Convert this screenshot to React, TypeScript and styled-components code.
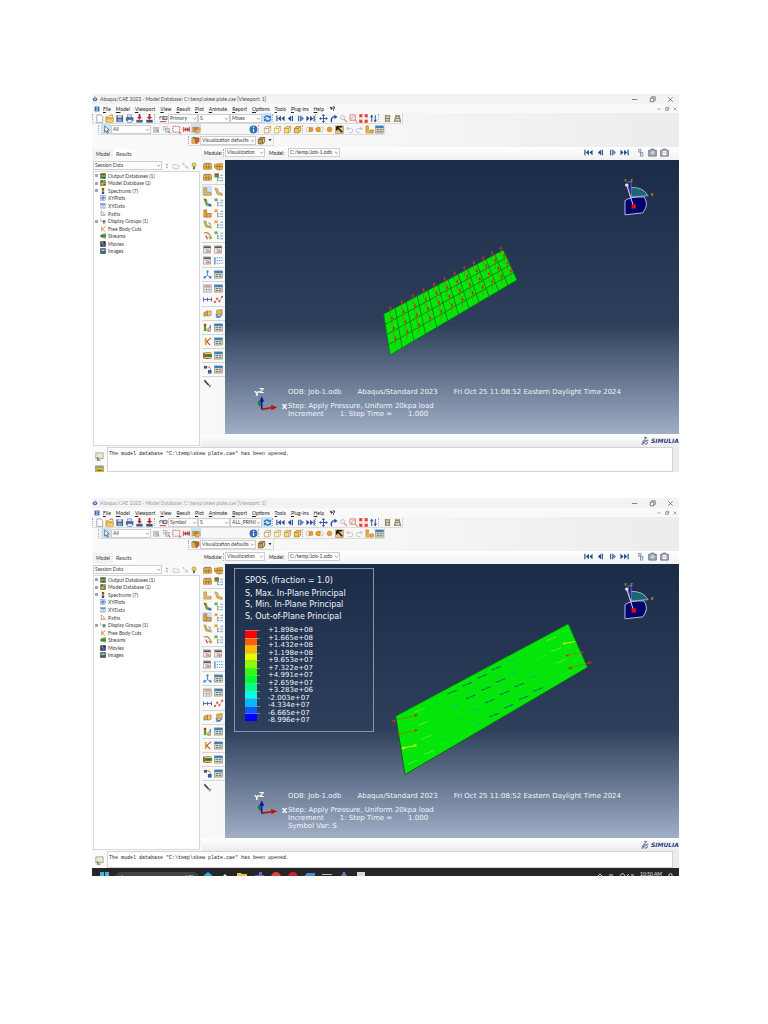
import React, { useId } from "react";
import styled, { createGlobalStyle } from "styled-components";

const Global = createGlobalStyle`
  * { box-sizing: border-box; }
  body { margin: 0; background: #fff; }
  button, select { font: inherit; color: inherit; margin: 0; }
`;

const Page = styled.main`
  display: flex;
  flex-direction: column;
  gap: 26px;
  padding: 94px 89px 148px 92px;
`;

const Frame = styled.section`
  display: flex;
  flex-direction: column;
  overflow: hidden;
  background: linear-gradient(90deg, #fafafa 0, #f6f6f6 50%, #ececec 100%);
  color: #3a3a3a;
  font: 5px/8px Lato, "Liberation Sans", sans-serif;
`;

/* ---------- icons ---------- */

const P = (d: string, stroke: string, w = 1, fill = "none") => (
  <path d={d} stroke={stroke} strokeWidth={w} fill={fill} />
);
const R = (x: number, y: number, w: number, h: number, fill: string, stroke?: string) => (
  <rect x={x} y={y} width={w} height={h} fill={fill} stroke={stroke} strokeWidth={stroke ? 0.6 : 0} />
);
const cube = (front: string, edge: string) => (
  <>
    {P("M1.5 3.8h5v5h-5z", edge, 0.8, front)}
    {P("M1.5 3.8l2-2.2h5l-2 2.2zM6.5 8.8l2-2.2v-5", edge, 0.8, front)}
  </>
);
const listTail = (
  <>
    {P("M4 4v5M4 5.5h2M4 8.5h2", "#4e7f78", 0.7)}
    {P("M7 2.5h3M7 5.5h3M7 8.5h3", "#5d8ec4", 0.9)}
  </>
);

const icons: Record<string, React.ReactNode> = {
  abaqus: <>{R(2, 3, 6, 5, "#5562a8")}{P("M5 1v8M1 5.5h8", "#39458c", 1.2)}{R(3.7, 4, 2.6, 2.6, "#dfe4f6")}</>,
  doc: <>{R(1, 1, 8, 8, "#2f63b8")}{P("M3 3h4M5 3v4M3 7h4", "#fff", 1)}</>,
  page: P("M2 1h4.5l2 2v6.5H2z", "#8d9298", 0.8, "#fdfdfd"),
  open: <>{P("M1 9V3h3l1 1h4v5z", "#c4861f", 0.6, "#f4b244")}{P("M1 9l2-3.5h7L8.500 9z", "#c4861f", 0.5, "#ffd176")}{P("M5 2l3-1 1 2", "#d04a2c", 0.9)}</>,
  save: <>{R(1.5, 1.5, 7.5, 7.5, "#44638f")}{R(3, 1.5, 4.5, 2.6, "#cfd9e8")}{R(3, 5.5, 4.500, 3.5, "#86a0c4")}</>,
  print: <>{R(3, 1, 4.5, 3, "#dfe6f2", "#5a6da0")}{R(1, 3.6, 8.4, 4, "#4d66a8")}{R(2.800, 6.400, 5, 2.800, "#e8edf6", "#5a6da0")}</>,
  down: <>{P("M5 0v4", "#c31f26", 2)}{P("M2.500 3.400h5L5 6.3z", "none", 0, "#c31f26")}{R(1.5, 6.5, 7, 3, "#4d6288")}</>,
  up: <>{P("M5 0v4", "#c31f26", 2)}{P("M2 3.200h6L5 6.3z", "none", 0, "#c31f26")}{R(1.5, 6.5, 7, 3, "#35507c")}</>,
  state: <>{P("M1 3h3v3h5M1 3v3M6 3v3", "#5b6577", 1)}{R(5, 2.5, 4, 3.500, "#b9c4d4", "#556")}{P("M1 8.5h7", "#c0392b", 1)}</>,
  sync: <>{P("M1.500 4.500C2 2 5 1.500 7 3.400M8.500 5.500C8 8 5 8.500 3 6.600", "#2b6fc2", 1.5)}{P("M8.800 1.500v3.200H5.600zM1.200 8.500V5.300h3.200z", "none", 0, "#2b6fc2")}</>,
  first: <>{P("M1 2v6", "#234f8e", 1.3)}{P("M5.500 2v6L2 5zM9.500 2v6L6 5z", "none", 0, "#234f8e")}</>,
  prev: <>{P("M5.500 2v6L2 5z", "none", 0, "#234f8e")}{P("M7 2v6", "#234f8e", 1.4)}</>,
  next: <>{P("M5 2v6l3.500-3z", "#234f8e", 0.6, "#6d97cf")}{P("M3 2v6", "#234f8e", 1.2)}</>,
  last: <>{P("M9 2v6", "#234f8e", 1.3)}{P("M.5 2v6L4 5zM4.500 2v6L8 5z", "none", 0, "#234f8e")}</>,
  move: <>{P("M5 1.5v7M1.500 5h7", "#2e4da6", 1)}{P("M5 0l1.800 2.300H3.200zM5 10l1.800-2.300H3.200zM0 5l2.300-1.800v3.600zM10 5L7.700 3.200v3.600z", "none", 0, "#2e4da6")}</>,
  rotate: <>{P("M3 9C1.500 5.500 3.500 2.500 7 3", "#2e4da6", 1.6)}{P("M6 .500l3.500 2.800L6 5.500z", "none", 0, "#2e4da6")}</>,
  mag: <><circle cx="4" cy="4" r="2.400" fill="#e8eef4" stroke="#b3bac0" strokeWidth=".8" />{P("M5.800 5.800L9 9", "#d0a05a", 1.3)}</>,
  magbox: <>{P("M1 1h6v6H1z", "#dd5c55", 0.8)}<circle cx="5" cy="5" r="2.200" fill="#f2e6e6" stroke="#c99" strokeWidth=".7" />{P("M6.500 6.500L9.500 9.500", "#d0a05a", 1.3)}</>,
  fit: <>{R(1, 1, 8, 8, "#fbe9e7")}{P("M1 4V1h3M6 1h3v3M9 6v3H6M4 9H1V6M1 1l2.500 2.500M9 1L6.500 3.500M9 9L6.500 6.500M1 9l2.500-2.500", "#d8342c", 1.3)}</>,
  updown: <>{P("M3 2v7M7 1v7", "#4467ae", 1.2)}{P("M1.200 3.500L3 .500l1.800 3zM5.200 6.500L7 9.500l1.800-3z", "none", 0, "#2b4f9a")}</>,
  ortho: P("M3 1v8M7 1v8M2 2h6M2 5h6M2 8h6", "#8f8767", 1.4),
  persp: P("M3.500 1L1.500 9M6.500 1l2 8M3 2.500h4M2.500 5h5M1.500 8h7", "#8f8767", 1.4),
  cursor: P("M3 1l5 4.500-2.300.3L7 8.600l-1.300.6-1.200-2.800L3 8z", "#333", 0.7, "#fff"),
  graysel: <>{R(2, 3, 5, 5, "#cbcbcb", "#999")}{P("M5 5l3 3", "#777", 1)}</>,
  grayadd: <>{R(1.500, 1.500, 4, 4, "#e4e4e4", "#aaa")}{R(4, 4, 4, 4, "#d5d5d5", "#999")}{P("M7 7l2.500 2.500", "#777", 1)}</>,
  redbox: <>{<rect x="1" y="1.500" width="7.500" height="6.500" fill="none" stroke="#d84a43" strokeWidth="1" strokeDasharray="1.500 1" />}{P("M7.500 9.500h2v-2z", "none", 0, "#444")}</>,
  redpts: <>{P("M1.500 2v6M8.500 2v6", "#d84a43", 1, "none")}{R(3, 3, 1.800, 4, "#c9362c")}{R(5.600, 3, 1.800, 4, "#c9362c")}{P("M1 5h8", "#8a4a28", 0.8)}</>,
  orange: <>{R(1, 2.500, 5, 5, "#e39a2f", "#a56a1a")}{P("M4 3h5v4l-2 2H4z", "#a56a1a", 0.5, "#f6b24a")}{P("M3 4.500h4", "#2d62a8", 1)}</>,
  info: <><circle cx="5" cy="5" r="4.400" fill="#356fb4" />{P("M5 4.200v3.600", "#fff", 1.300)}{R(4.300, 2, 1.400, 1.400, "#fff")}</>,
  wire: cube("#fbf5e6", "#b59a62"),
  wire2: cube("#fdf3d2", "#c5a451"),
  fill1: cube("#f6dc83", "#b8912f"),
  fill2: cube("#efc455", "#a98123"),
  circ1: <><circle cx="3.800" cy="5" r="2.700" fill="#fff" stroke="#b8a68c" strokeWidth=".7" />{P("M4.500 3h4v4h-4z", "#b66b14", 0.6, "#ee9a2c")}</>,
  circ2: <><circle cx="6.500" cy="5" r="2.700" fill="#fff" stroke="#b8a68c" strokeWidth=".7" /><circle cx="3.500" cy="5" r="2.600" fill="#ee9a2c" stroke="#b66b14" strokeWidth=".6" /></>,
  circ3: <circle cx="5" cy="5" r="2.700" fill="#ee9a2c" stroke="#c9791c" strokeWidth=".6" />,
  black: <>{R(0.800, 1, 8.400, 8.400, "#f0c27a", "#9c7b4a")}{P("M2 2l6 6M2 2v4M2 2h6", "#1b1b1b", 1.800)}</>,
  undo: <>{P("M3 4h3.500a2.200 2.200 0 010 4.500H4", "#c2c2c2", 1)}{P("M3.800 1.800v4.400L1.200 4z", "none", 0, "#c2c2c2")}</>,
  redo: <>{P("M7 4H3.500a2.200 2.200 0 000 4.500H6", "#c2c2c2", 1)}{P("M6.200 1.800v4.400L8.800 4z", "none", 0, "#c2c2c2")}</>,
  parts: <>{R(1, 1, 3, 4, "#eea53c", "#b67a20")}{R(1, 6, 4, 3, "#f1bf5b", "#b67a20")}{R(6, 5.500, 3.500, 3.500, "#eea53c", "#b67a20")}</>,
  win: <>{R(0.500, 1, 9, 8, "#d8d2b4", "#77808a")}{R(0.500, 1, 9, 2.400, "#3385c6")}{P("M2 5h2.500M2 7.300h2.500M5.500 5H8M5.500 7.300H8", "#677079", 1)}</>,
  palette: <>{R(1, 2, 5, 6, "#e9b248", "#9a701f")}{P("M4 2h5v4l-3 3z", "#7f3a20", 0.5, "#cf5a35")}{R(2, 1, 3, 2, "#4b9a47")}</>,
  brown: cube("#bd9a54", "#6f5628"),
  caret: P("M2.500 3.500h5L5 7z", "none", 0, "#333"),
  link: <>{P("M3 1.500h2.500v3H3zM5 5h2.500v4H5zM4 4.500L6 6", "#7f87b8", 1)}</>,
  cam: <>{P("M.8 2.500h2l.7-1.300h3l.7 1.300h2V9H.8z", "#5b6470", 0.9, "#aab3bc")}<rect x="2.500" y="3.500" width="5" height="4" fill="#eef1f4" stroke="#7892ad" strokeWidth=".6" />{P("M3 6.500l2-1.500 2 1.500", "#c08080", 0.8)}</>,
  cam2: <>{P("M.8 2.500h2l.7-1.300h3l.7 1.300h2V9H.8z", "#5b6470", 0.9, "#aab3bc")}{R(3, 3.500, 4, 4.500, "#fff")}{P("M3.500 5.500h3", "#9ac", 1)}</>,
  spin: P("M3.500 4L5 2l1.500 2zM3.500 6L5 8l1.500-2z", "none", 0, "#999"),
  grayopen: P("M1.500 3h2.500l1 1h3.500v4h-7z", "#bdbdbd", 0.9),
  graycur: P("M2.500 2l5 5M4 2h-1.500v2M5 6l3 2V5", "#bdbdbd", 1),
  bulb: <><circle cx="5" cy="3.600" r="2.500" fill="#f5df3c" stroke="#6d7430" strokeWidth=".7" />{R(3.900, 6, 2.200, 3, "#495d7c")}</>,
  odb: <>{R(0.500, 0.500, 9, 9, "#25603c")}{P("M1 3h8", "#d7392e", 1.600)}{P("M1 5h8", "#e9d23c", 1.600)}{P("M1 7.500h4", "#3c79c9", 1.500)}</>,
  mdb: <>{R(0.500, 0.500, 9, 9, "#5a5b21")}{R(2, 4, 4, 4, "#e9b73c")}{P("M5 2.500h4M5.500 6h3", "#e7dd7c", 1.200)}</>,
  spectrum: <>{R(3, 0, 4, 3.300, "#d62b20")}{R(3, 3.300, 4, 3.300, "#4cc13c")}{R(3, 6.600, 4, 3.400, "#2b48ca")}</>,
  xyplot: <>{R(0.800, 0.800, 8.500, 8.500, "#d9e4f4", "#6687bc")}{P("M5 1v8M1 5h8", "#4569b4", 1.300)}{P("M2 7l6-4", "#be4444", 0.800)}</>,
  xydata: <>{R(0.800, 0.800, 8.500, 8.500, "#eef2f8", "#7a90b8")}{P("M1 2h8", "#4569b4", 1.800)}{P("M1 5h8M1 7.500h8M5 3v6", "#8ba3cb", 0.800)}</>,
  path: <>{P("M2 1v8h7", "#a1524a", 1)}{P("M3 2l3 3v2h3", "#c46055", 1)}</>,
  groups: <>{P("M1 1v4h4v4h4", "#8c8c8c", 1)}{R(5, 4, 4, 3.500, "#555")}</>,
  cuts: <>{P("M3 1v8", "#d9a23d", 2)}{P("M9 1L4 5l4 4", "#d1493d", 1.200)}</>,
  streams: <>{P("M0 5c2-4 6-4 10-4v8c-4 0-8 0-10-4z", "none", 0, "#2f9a3e")}{P("M2 5h8", "#2d57be", 1.600)}{P("M3 2.800h7M3 7.400h7", "#e4c634", 1.100)}</>,
  movies: <>{R(0.500, 0.500, 9, 9, "#1f2430")}{R(2.500, 1, 3, 4, "#3cc04b")}{R(5, 4, 3, 5, "#b734b1")}{R(2.500, 5, 2.500, 4, "#345ad1")}</>,
  images: <>{R(0.500, 0.500, 9, 9, "#20304a")}{R(2, 2, 6, 3, "#8cc1e6")}{R(2, 5, 6, 3, "#3b8452")}</>,
  mesh: <>{R(0.500, 3, 9, 5, "#f0b64a", "#a1782c")}{P("M3.500 3v5M6.500 3v5M.5 5.500h9", "#8c6a2c", 0.800)}{P("M1 1.500h8", "#8c6a2c", 1)}</>,
  mesh2: <>{P("M.5 2.500l9-1v7l-6 .5-3-3z", "#a1782c", 0.600, "#f0b64a")}{P("M3.500 2.500V8M6.500 2v7M.8 5h9", "#8c6a2c", 0.800)}</>,
  treeR: <>{R(0.500, 0.500, 5, 4.500, "#5c8f3b")}{P("M1 1.500h4", "#d53b2b", 1.500)}{listTail}</>,
  ell: P("M1 1h3v5h5v3H1z", "#a58132", 0.700, "#e5bd62"),
  ell2: P("M1 1l3 1 1 4 4 1v2.500L3.500 8z", "#a58132", 0.700, "#e0c37a"),
  ellR: <>{P("M1 1l3 1 1 4 4 1v2.500L3.500 8z", "#7a6f2f", 0.500, "#4bb94a")}{P("M1.500 1.500l2 1", "#d8392c", 2)}{P("M6 7.500l3 1", "#2f5fd0", 1.600)}</>,
  ellO: <>{P("M1 1h3v4h5v4H1z", "#9b5f1b", 0.700, "#eea443")}{P("M4 9V5", "#9b5f1b", 0.600)}</>,
  ellP: <>{P("M1 1l2.500.5.5 4 5 1.500v2L3 7.500z", "#8c8132", 0.700, "#d7c35c")}{P("M6 3l3 2", "#5c8f3b", 1.100)}</>,
  curve: <>{P("M1 2c5-1 7 2 7.500 6", "#c28f3e", 1.500)}{P("M3 5l2 4", "#d0503f", 1.400)}{P("M6 7l2.500 2L10 6.500", "#a6702b", 1)}</>,
  listO: <>{R(0.500, 0.500, 3.500, 3, "#e8a23c")}{listTail}</>,
  listG: <>{R(0.500, 0.500, 3.500, 3, "#5fb84a")}{listTail}</>,
  card: <>{R(0.800, 1, 7.500, 8, "#ecebe6", "#8a8a85")}{P("M1 2.500h7.500", "#56565a", 2)}{P("M3 5.500c1.500-1.500 2 1.500 4 .2M3 8c2-1.500 3 1 5.500-1", "#bf5a50", 1)}</>,
  dots: <>{P("M1 1.500v8", "#3c6fb9", 1.200)}<path d="M3 2h7M3 5h7M3 8h7" stroke="#5d9ce0" strokeWidth="1.200" strokeDasharray="1.500 1" fill="none" /></>,
  molecule: <>{P("M5 2.500V6L2 8.500M5 6l3 2.500", "#3982d2", 1)}{R(3.900, 0.500, 2.200, 2.400, "#3982d2")}{R(0.500, 7, 2.500, 2.300, "#3982d2")}{R(7, 7, 2.500, 2.300, "#3982d2")}</>,
  table: <>{R(0.800, 1, 8.400, 8, "#f1efee", "#8b8b8b")}{P("M1 3.500h8M4 3.500V9M7 3.500V9M1 6.200h8", "#9a9a9a", 0.700)}{P("M1.500 2.200h7", "#c8706a", 1.200)}</>,
  arrows: <>{P("M1 5h8", "#5c5fae", 1)}{P("M.5 2.800v4.400M5 3v4M9.500 2.800v4.400", "#5c5fae", 1.200)}</>,
  zigzag: <>{P("M1 8l2.500-4L6 7l3-5", "#d98a7e", 0.700)}{R(0, 6.800, 2, 2, "#d24a3e")}{R(2.600, 3, 2, 2, "#d24a3e")}{R(5, 6, 2, 2, "#d24a3e")}{R(8, 1, 2, 2, "#d24a3e")}</>,
  plates: <>{P("M1 4l4-2v5L1 8z", "#8d6c22", 0.600, "#d7aa41")}{P("M5 3l4-1v5L5 8z", "#8d6c22", 0.600, "#efc96c")}</>,
  plates2: <>{P("M3 1.500l6-1v5l-6 1z", "#8d6c22", 0.600, "#e4b74c")}{P("M2 6c2 3 5 3 7 0M2 9h5", "#4d7cc4", 1.200)}</>,
  rainL: <>{R(1, 1, 2.500, 8, "#3cab3c")}{R(1, 1, 2.500, 2.500, "#d63227")}{R(3.500, 6, 3, 3, "#d8c030")}{P("M8 2v7h-3M6 6l3-2", "#5e5b66", 0.900)}</>,
  rain: <>{P("M0 2c4-1 7-1 10 0v6c-3 1-7 1-10 0z", "none", 0, "#d8472e")}{P("M2 2.800h8M2 7.200h8", "#e2d23b", 1.300)}{P("M1 5h9", "#2d9f42", 3)}{P("M3 5h6", "#2b5b87", 1)}</>,
  sweep: <>{R(1, 1, 3.500, 3, "#36588c")}{R(5.500, 5.500, 4, 4, "#2b5f9e")}{P("M5 2c3 0 3 1.500 3.500 3", "#b14a44", 1)}</>,
  wand: <>{P("M1.500 1.500l5 5.500", "#4b4138", 1.800)}{P("M6 7l3.500-.5L7.500 10z", "none", 0, "#56b04c")}</>,
  min: P("M2 5h6", "#555", 0.800),
  max: P("M2.500 3.500h4v4h-4zM4 3V2h4v4H7", "#555", 0.800),
  close: P("M2.500 2.500l5 5M7.500 2.500l-5 5", "#555", 0.800),
  help: <>{P("M1 1l3 6 1-2.500L8 4z", "none", 0, "#222")}{P("M6 1.500h3v2L7.500 6v2", "#222", 1.400)}</>,
  msg: <>{R(1, 1, 8, 6.500, "#e9e7da", "#77766a")}{P("M3 5.500v4M2 9h4", "#8c7f46", 1.400)}</>,
  cli: <>{R(0.500, 1, 9, 8.500, "#d7bf3a", "#8c8452")}{R(0.500, 1, 9, 2.500, "#9aa28d")}{P("M2 6h6", "#5e5622", 1)}</>,
};

const Glyph = ({ name, size = 9 }: { name: string; size?: number }) => (
  <svg width={size} height={size} viewBox="0 0 10 10" aria-hidden="true">
    {icons[name]}
  </svg>
);

const ToolButton = styled.button<{ $on?: boolean; $w?: number }>`
  display: flex;
  align-items: center;
  justify-content: center;
  flex: none;
  width: ${(p) => p.$w ?? 10}px;
  height: 10px;
  padding: 0;
  border: 0;
  background: ${(p) => (p.$on ? "#c9e2f6" : "transparent")};
`;

const Tool = ({ name, on, w, size }: { name: string; on?: boolean; w?: number; size?: number }) => (
  <ToolButton type="button" aria-label={name} $on={on} $w={w}>
    <Glyph name={name} size={size} />
  </ToolButton>
);

const Tools = ({ names, on }: { names: string; on?: string }) => (
  <>
    {names.split(" ").map((n) => (
      <Tool key={n} name={n} on={n === on} />
    ))}
  </>
);

/* ---------- drop-down ---------- */

const Combo = styled.span<{ $w: number }>`
  display: flex;
  align-items: center;
  flex: none;
  width: ${(p) => p.$w}px;
  height: 9px;
  padding: 0 0 0 1px;
  background: #fff;
  border: 1px solid #cecece;

  select {
    flex: 1;
    min-width: 0;
    height: 7px;
    padding: 0;
    border: 0;
    appearance: none;
    background: transparent;
    line-height: 7px;
  }
`;

const Drop = ({ value, w, id, label }: { value: string; w: number; id?: string; label?: string }) => (
  <Combo $w={w}>
    <select id={id} aria-label={label} defaultValue={value}>
      <option>{value}</option>
    </select>
    <svg width="5" height="5" viewBox="0 0 10 10" aria-hidden="true">
      {P("M2 3.500L5 7l3-3.500", "#777", 1.300)}
    </svg>
  </Combo>
);

/* ---------- bars ---------- */

const TitleBar = styled.header<{ $dim?: boolean }>`
  display: flex;
  align-items: center;
  height: 10px;
  background: #f3f3f5;
  color: ${(p) => (p.$dim ? "#a0a0a0" : "#4a4a4a")};
`;
const Title = styled.h1`
  flex: 1;
  margin: 0 0 0 2px;
  font: inherit;
`;
const WindowButtons = styled.div<{ $gap: number }>`
  display: flex;
  gap: ${(p) => p.$gap}px;
  margin-left: auto;
  padding-right: ${(p) => (p.$gap > 2 ? 4 : 0)}px;
`;
const MenuBar = styled.nav`
  display: flex;
  align-items: center;
  height: 9px;
  background: #f9f9f9;
`;
const MenuItems = styled.div`
  display: flex;
  align-items: center;
  gap: 5px;
  margin-left: 2px;
`;
const MenuButton = styled.button`
  padding: 0;
  border: 0;
  background: none;
  line-height: 8px;
  color: #222;

  &::first-letter { text-decoration: underline; }
`;
const ToolRow = styled.div<{ $indent?: number; $h?: number }>`
  display: flex;
  height: ${(p) => p.$h ?? 11}px;
  padding-left: ${(p) => p.$indent ?? 0}px;
`;
const ToolStrip = styled.div`
  display: flex;
  align-items: center;
  height: 11px;
  background: #f7f7f7;
  border-right: 1px solid #dcdcdc;
  border-bottom: 1px solid #dcdcdc;
`;
const Grip = styled.span<{ $w?: number }>`
  flex: none;
  width: ${(p) => p.$w ?? 3}px;
  height: 8px;
  border-left: 1px dotted #a9a9a9;
`;
const Gap = styled.span`
  width: 47px;
`;

/* ---------- body ---------- */

const Body = styled.div`
  display: flex;
`;
const Side = styled.aside`
  display: flex;
  flex-direction: column;
  flex: none;
  width: 110px;
  padding: 0 2px 1px 1px;
`;
const Tabs = styled.div`
  display: flex;
  align-items: center;
  height: 13px;
`;
const Tab = styled.button<{ $active?: boolean }>`
  height: 10px;
  padding: 0 3px;
  border: 0;
  background: ${(p) => (p.$active ? "#fff" : "#f2f2f2")};
`;
const SideTools = styled.div`
  display: flex;
  align-items: center;
  height: 11px;
`;
const TreeBox = styled.div`
  flex: 1;
  background: #fff;
  border: 1px solid #d9d9d9;
`;
const Tree = styled.ul`
  display: grid;
  grid-auto-rows: 1fr;
  height: 83px;
  margin: 0;
  padding: 0 0 0 1px;
  list-style: none;
`;
const TreeItem = styled.li`
  display: flex;
  align-items: center;
  gap: 2px;
  min-height: 0;
`;
const Expander = styled.span<{ $shown?: boolean }>`
  width: 3px;
  height: 3px;
  background: ${(p) => (p.$shown ? "#9aa6b8" : "transparent")};
`;

const Work = styled.div`
  display: flex;
  flex-direction: column;
  flex: 1;
  min-width: 0;
`;
const Context = styled.div`
  display: flex;
  align-items: center;
  height: 13px;
  padding: 0 10px 2px 2px;
  background: linear-gradient(#fff, #f1f1f1);
`;
const ContextLabel = styled.label`
  width: 19px;
  color: #222;
`;
const ContextGap = styled.span<{ $w: number }>`
  width: ${(p) => p.$w}px;
`;
const Playback = styled.div`
  display: flex;
  gap: 2px;
  margin-left: auto;
`;
const Stage = styled.div`
  display: flex;
  min-height: 274px;
`;
const Toolbox = styled.div`
  flex: none;
  width: 23px;
  padding-top: 1px;
`;
const ToolGroup = styled.div`
  display: grid;
  grid-template-columns: 10px 10px;
  grid-auto-rows: 11px;
  column-gap: 1px;
  padding-bottom: 1px;
  margin-bottom: 1px;
  border-bottom: 1px solid #d5d5d5;

  &:last-child { border-color: transparent; }
`;
const Viewport = styled.div`
  position: relative;
  flex: 1;
  min-width: 0;
  overflow: hidden;
  background: linear-gradient(#1b2c48 0, #2d3f5a 60%, #a0aec6 100%);
  color: #f2f4f8;
  font: 7px/8px "DejaVu Sans", Verdana, sans-serif;
`;
const Scene = styled.svg`
  position: absolute;
  left: 0;
  top: 0;
`;
const CompassArt = styled.svg`
  position: absolute;
  right: 24px;
  top: 17px;
`;
const TriadArt = styled.svg`
  position: absolute;
  left: 28px;
  top: 225px;
`;
const Status = styled.div`
  position: absolute;
  left: 63px;
  top: 228px;
  white-space: pre;
`;
const StatusLine = styled.p<{ $gap?: number; $after?: number }>`
  display: flex;
  gap: ${(p) => p.$gap ?? 0}px;
  margin: 0 0 ${(p) => p.$after ?? 0}px;
`;
const Prompt = styled.div`
  display: flex;
  align-items: center;
  justify-content: flex-end;
  gap: 2px;
  height: 13px;
  background: linear-gradient(#fff, #ececec);
  color: #2c3a86;
  font: italic bold 6px/8px "DejaVu Sans", sans-serif;
`;

const Legend = styled.div`
  position: absolute;
  left: 9px;
  top: 4px;
  width: 140px;
  height: 164px;
  padding: 8px 10px;
  border: 1px solid #8894a8;
`;
const LegendLine = styled.p<{ $after: number }>`
  margin: 0 0 ${(p) => p.$after}px;
  font-size: 8px;
  line-height: 8px;
  white-space: nowrap;
`;
const Scale = styled.div`
  display: flex;
  gap: 11px;
`;
const Ramp = styled.div`
  display: flex;
  flex-direction: column;
  width: 12px;
  height: 91px;
  margin-top: 4px;
`;
const Swatch = styled.span<{ $c: string }>`
  position: relative;
  flex: 1;
  background: ${(p) => p.$c};

  &::after {
    content: "";
    position: absolute;
    left: 0;
    top: 0;
    width: 15px;
    height: 1px;
    background: #a8b2c0;
    opacity: 0.6;
  }
`;
const Values = styled.ol`
  display: grid;
  grid-auto-rows: 1fr;
  height: 98px;
  margin: 0;
  padding: 0;
  list-style: none;

  li { min-height: 0; }
`;

const MessageArea = styled.footer<{ $h: number }>`
  display: flex;
  height: ${(p) => p.$h}px;
  padding-right: 6px;
  overflow: hidden;
`;
const MessageTabs = styled.div`
  display: flex;
  flex-direction: column;
  gap: 3px;
  width: 15px;
  padding: 4px 0 0 2px;
`;
const MessageText = styled.p`
  flex: 1;
  margin: 0;
  padding: 2px 1px;
  background: #fff;
  border: 1px solid #d4d4d4;
  font: 5px/8px "Liberation Mono", monospace;
  color: #222;
  white-space: pre;
`;

/* ---------- drawings ---------- */

type Pt = [number, number];

const TL: Pt = [41, 237];
const TR: Pt = [400, 45];
const BR: Pt = [441, 135];
const BL: Pt = [60, 360];
const mix = (a: Pt, b: Pt, t: number): Pt => [a[0] + (b[0] - a[0]) * t, a[1] + (b[1] - a[1]) * t];
const along = (i: number) => (34.5 * i - 0.4 * i * (i - 1)) / 361.2;
const plate = (i: number, j: number) => mix(mix(TL, TR, along(i)), mix(BL, BR, along(i)), j / 4);
const seg = (a: Pt, b: Pt) => `M${a[0]} ${a[1]}L${b[0]} ${b[1]}`;

const PressurePlate = () => {
  const lines = [
    ...Array.from({ length: 13 }, (_, i) => seg(plate(i, 0), plate(i, 4))),
    ...Array.from({ length: 5 }, (_, j) => seg(plate(0, j), plate(12, j))),
  ].join("");
  const loads: Pt[] = [];
  for (let j = 0; j < 4; j++) for (let i = 0; i < 12; i++) loads.push(plate(i + 0.5, j + 0.5));
  return (
    <Scene width="454" height="274" viewBox="0 0 454 274" aria-label="Pressure load on plate">
      <g transform="translate(145 75) scale(.3333)">
        <path d={`M${TL}L${TR}L${BR}L${BL}Z`} fill="#04e60a" />
        <path d={lines} stroke="#0a7a14" strokeWidth="2.600" fill="none" />
        {loads.map(([x, y]) => (
          <g key={`${x}-${y}`}>
            <path d={`M${x} ${y}V${y - 26}`} stroke="#a8502a" strokeWidth="1.600" />
            <path d={`M${x - 4} ${y - 21}l4-11 4 11z`} fill="#d8281c" />
          </g>
        ))}
      </g>
    </Scene>
  );
};

const blueDashes: Pt[] = [
  [216, 246], [262, 222], [307, 198], [349, 174], [272, 260], [318, 235], [362, 211],
  [329, 273], [374, 248], [417, 225], [342, 315], [387, 288], [431, 263], [474, 238],
];
const tealDashes: Pt[] = [
  [393, 152], [405, 187], [226, 287], [284, 300], [460, 200], [295, 342], [170, 272], [178, 312], [238, 326], [447, 163], [517, 213],
];
const limeDashes: Pt[] = [
  [120, 300], [130, 340], [138, 382], [148, 427], [98, 456], [513, 86], [528, 119], [543, 154], [198, 398], [488, 140], [547, 66], [475, 106], [558, 190],
];

const StressPlate = () => (
  <Scene width="454" height="274" viewBox="0 0 454 274" aria-label="Principal stress symbols on plate">
    <g transform="translate(155 46) scale(.3333)" fill="none">
      <path d="M47 318L565 41L623 172L75 494Z" fill="#04e60a" stroke="#12631c" strokeWidth="3" />
      {blueDashes.map(([x, y]) => (
        <path key={`${x}${y}`} d={`M${x - 14} ${y + 6}L${x - 3} ${y + 2}M${x - 1} ${y + 1}L${x + 14} ${y - 5}`} stroke="#0a5a80" strokeWidth="3" />
      ))}
      {tealDashes.map(([x, y], i) => (
        <path key={`${x}${y}`} d={i < 6 ? `M${x - 11} ${y + 4}L${x + 11} ${y - 4}` : `M${x - 6} ${y + 2}L${x + 6} ${y - 2}`} stroke="#15b37a" strokeWidth="3" />
      ))}
      {limeDashes.map(([x, y], i) => (
        <path key={`${x}${y}`} d={`M${x - 15} ${y + 6}L${x + 15} ${y - 6}`} stroke={i < 8 ? "#66f02c" : "#25e82a"} strokeWidth="2.500" />
      ))}
      <path d="M66 415L110 406M550 101L586 95" stroke="#c8ee10" strokeWidth="3" />
      <path d="M64 415l10-6v10zM112 406l-10-4v9zM547 101l9-5v9z" fill="#d8e010" />
      <path d="M36 333L110 316M52 373L110 361M560 136L608 127M566 174L632 158" stroke="#a06a10" strokeWidth="2" />
      <path d="M32 334l11-5 1 8zM115 315l-12-3 2 8zM48 374l9-5 1 7zM114 361l-10-3 1 7zM612 126l-10-3 1 8zM556 137l9-4 1 7zM637 157l-12-4 2 9zM562 175l12-5 1 8z" fill="#c03010" />
    </g>
  </Scene>
);

const Compass = () => (
  <CompassArt width="33" height="40" viewBox="425 262 100 120" aria-label="View compass">
    <path d="M434 333Q450 320 492 322Q508 346 488 370L434 376Z" fill="#02026c" stroke="#b9b6e6" strokeWidth="3" />
    <path d="M448 293Q488 290 504 318L453 322Z" fill="#156a72" stroke="#b9b6e6" strokeWidth="2.500" />
    <path d="M443 276h9l2 40h-5z" fill="#1b1480" stroke="#8f86d8" strokeWidth="2" />
    <path d="M439 286L460 350" stroke="#dcd2f4" strokeWidth="3" />
    <circle cx="439" cy="286" r="5" fill="#e8e2fa" />
    <rect x="454" y="344" width="13" height="13" fill="#e80a10" />
    <g fill="#a9a53a" fontFamily="DejaVu Sans, sans-serif" fontSize="12" fontWeight="bold">
      <text x="431" y="278">Y</text>
      <text x="449" y="276">Z</text>
      <text x="511" y="320">X</text>
    </g>
  </CompassArt>
);

const Triad = () => (
  <TriadArt width="35" height="27" viewBox="40 30 105 81" aria-label="Axes">
    <path d="M53 82l8-6 4 14-7 5z" fill="#0c8a25" />
    <path d="M66 103V78" stroke="#1012a8" strokeWidth="5" />
    <path d="M59 80l7-16 8 16z" fill="#0f12b4" />
    <path d="M66 103L96 98" stroke="#b01a1a" strokeWidth="5" />
    <path d="M94 90l19 7-18 9z" fill="#b81414" />
    <g fill="#fff" fontFamily="DejaVu Sans, sans-serif" fontSize="21" fontWeight="bold">
      <text x="44" y="64">Y</text>
      <text x="58" y="53">Z</text>
      <text x="126" y="101">X</text>
    </g>
  </TriadArt>
);

const DsLogo = () => (
  <svg width="8" height="8" viewBox="0 0 24 24" fill="none" stroke="#2c3a86" strokeWidth="2.500" aria-hidden="true">
    <path d="M9 2h8l-6 6M10 9c5 1 4 7-6 8l6-8M1 21c5 1 9-1 10-4M22 10c-6-2-8 2-4 5s0 7-6 6" />
  </svg>
);

/* ---------- taskbar ---------- */

const TaskBar = styled.div`
  display: flex;
  align-items: flex-start;
  height: 8px;
  padding: 4px 6px 0 8px;
  overflow: hidden;
  background: #262626;
  color: #e6e6e6;
`;
const Search = styled.span`
  display: flex;
  align-items: center;
  justify-content: space-between;
  width: 84px;
  height: 12px;
  margin: 0 4px 0 6px;
  padding: 0 4px;
  border-radius: 6px;
  background: #444;
`;
const TaskIcons = styled.div`
  display: flex;
  gap: 7px;
`;
const Tray = styled.div`
  display: flex;
  gap: 6px;
  margin-left: auto;
  line-height: 5px;
`;
const taskShapes: [string, string][] = [
  ["#2ba8dd", "M1 3l4-3 4 3v7H1z"],
  ["#f2f2f2", "M2 5l3-3 3 3v5H2z"],
  ["#f2c14e", "M0 1h4l1 1h5v8H0z"],
  ["#6a66c8", "M1 3h4V0h3v3h2v7H1z"],
  ["#d9463c", "M0 5a5 5 0 0110 0v5H0z"],
  ["#cc2530", "M0 5a5 5 0 0110 0v5H0z"],
  ["#3b8fe0", "M2 1h8v9H0V3z"],
  ["#b9b9b9", "M0 2h10v1H0zM0 5h10v5H0z"],
  ["#7a70c0", "M4 0h2l1 3 3 2v5H0V5l3-2z"],
  ["#e0d8d4", "M1 0h8v10H1z"],
];

const Taskbar = () => (
  <TaskBar>
    <svg width="9" height="9" viewBox="0 0 9 9" aria-hidden="true">
      <path d="M0 0h4v4H0zM5 0h4v4H5zM0 5h4v4H0zM5 5h4v4H5z" fill="#42b4ec" />
    </svg>
    <Search>
      <svg width="6" height="8" viewBox="0 0 6 8" aria-hidden="true">
        <circle cx="3" cy="4" r="2" fill="none" stroke="#ddd" strokeWidth="1" />
      </svg>
      <svg width="14" height="9" viewBox="0 0 14 9" aria-hidden="true">
        <path d="M1 3l5-2v4z" fill="#d98a6a" />
        <path d="M7 1h5l2 3-3 4z" fill="#3c9fe6" />
      </svg>
    </Search>
    <TaskIcons>
      {taskShapes.map(([c, d]) => (
        <svg key={c} width="10" height="10" viewBox="0 0 10 10" aria-hidden="true">
          <path d={d} fill={c} />
        </svg>
      ))}
    </TaskIcons>
    <Tray>
      <svg width="36" height="6" viewBox="0 0 36 6" fill="none" stroke="#d0d0d0" aria-hidden="true">
        <path d="M0 4l2-2 2 2M11 3h4M22 4c1-3 4-3 5 0M29 4l2-2M33 3h3" />
      </svg>
      <span>10:50 AM</span>
      <svg width="5" height="6" viewBox="0 0 5 6" fill="none" stroke="#d0d0d0" aria-hidden="true">
        <path d="M1 5V3a1.500 1.500 0 013 0v2" />
      </svg>
    </Tray>
  </TaskBar>
);

/* ---------- data ---------- */

const menus = ["File", "Model", "Viewport", "View", "Result", "Plot", "Animate", "Report", "Options", "Tools", "Plug-ins", "Help"];

const treeItems: [string, string, boolean][] = [
  ["odb", "Output Databases (1)", true],
  ["mdb", "Model Database (1)", true],
  ["spectrum", "Spectrums (7)", true],
  ["xyplot", "XYPlots", false],
  ["xydata", "XYData", false],
  ["path", "Paths", false],
  ["groups", "Display Groups (1)", true],
  ["cuts", "Free Body Cuts", false],
  ["streams", "Streams", false],
  ["movies", "Movies", false],
  ["images", "Images", false],
];

const toolGroups = [
  ["mesh", "mesh2", "mesh", "treeR"],
  ["ell", "ell2", "ellR", "listG", "ellO", "listO", "ellP", "listO", "curve", "listG"],
  ["card", "card", "card", "dots"],
  ["molecule", "win"],
  ["table", "win", "arrows", "zigzag"],
  ["plates", "plates2"],
  ["rainL", "win"],
  ["cuts", "win"],
  ["rain", "win"],
  ["sweep", "win"],
  ["wand"],
];

const ramp = ["#ff0000", "#ff5d00", "#ffb900", "#e8ff00", "#8bff00", "#2eff00", "#00ff2e", "#00ff8b", "#00ffe8", "#00b9ff", "#005dff", "#0000ff"];
const values = ["+1.898e+08", "+1.665e+08", "+1.432e+08", "+1.198e+08", "+9.653e+07", "+7.322e+07", "+4.991e+07", "+2.659e+07", "+3.283e+06", "-2.003e+07", "-4.334e+07", "-6.665e+07", "-8.996e+07"];

type WindowProps = {
  plot: string;
  variable: string;
  activeTool: string;
  inactive?: boolean;
  messageHeight: number;
  messageIcons: string[];
  symbolVar?: string;
  children: React.ReactNode;
};

const AbaqusWindow = ({ plot, variable, activeTool, inactive, messageHeight, messageIcons, symbolVar, children }: WindowProps) => {
  const id = useId();
  return (
    <>
      <TitleBar $dim={inactive}>
        <Glyph name="abaqus" size={6} />
        <Title>Abaqus/CAE 2023 - Model Database: C:\temp\skew plate.cae [Viewport: 1]</Title>
        <WindowButtons $gap={8}>
          <Tools names="min max close" />
        </WindowButtons>
      </TitleBar>
      <MenuBar>
        <Tool name="doc" w={9} size={6} />
        <MenuItems>
          {menus.map((m) => (
            <MenuButton key={m} type="button">{m}</MenuButton>
          ))}
          <Tool name="help" size={6} w={6} />
        </MenuItems>
        <WindowButtons $gap={0}>
          {["min", "max", "close"].map((n) => (
            <Tool key={n} name={n} size={6} w={8} />
          ))}
        </WindowButtons>
      </MenuBar>
      <ToolRow>
        <ToolStrip>
          <Grip $w={2} />
          <Tools names="page open save print down up" />
          <Grip $w={4} />
          <Tool name="state" />
          <Drop label="Plot state" value={plot} w={30} />
          <Drop label="Output" value="S" w={32} />
          <Drop label="Invariant" value={variable} w={32} />
          <Tools names="sync" on="sync" />
          <Grip />
          <Tools names="first prev next last" />
          <Grip />
          <Tools names="move rotate mag magbox fit updown" />
          <Grip $w={4} />
          <Tools names="ortho persp" />
        </ToolStrip>
      </ToolRow>
      <ToolRow $indent={6}>
        <ToolStrip>
          <Grip />
          <Tools names="cursor" on="cursor" />
          <Drop label="Selection" value="All" w={40} />
          <Tools names="graysel grayadd redbox redpts orange" on="orange" />
          <Gap />
          <Tools names="info" />
          <Grip $w={4} />
          <Tools names="wire wire2 fill1 fill2" />
          <Grip $w={2} />
          <Tools names="circ1 circ2 circ3 black undo redo parts win" />
        </ToolStrip>
      </ToolRow>
      <ToolRow $indent={96} $h={12}>
        <ToolStrip>
          <Grip $w={2} />
          <Tool name="palette" />
          <Drop label="Defaults" value="Visualization defaults" w={56} />
          <Tool name="brown" />
          <Tool name="caret" w={7} size={6} />
        </ToolStrip>
      </ToolRow>
      <Body>
        <Side>
          <Tabs>
            <Tab type="button">Model</Tab>
            <Tab type="button" $active>Results</Tab>
          </Tabs>
          <SideTools>
            <Drop label="Tree" value="Session Data" w={69} />
            {["spin", "grayopen", "graycur", "bulb"].map((n) => (
              <Tool key={n} name={n} size={8} w={9} />
            ))}
          </SideTools>
          <TreeBox>
            <Tree>
              {treeItems.map(([icon, text, open]) => (
                <TreeItem key={text}>
                  <Expander $shown={open} />
                  <Glyph name={icon} size={6} />
                  {text}
                </TreeItem>
              ))}
            </Tree>
          </TreeBox>
        </Side>
        <Work>
          <Context>
            <ContextLabel htmlFor={`${id}-module`}>Module:</ContextLabel>
            <Grip $w={2} />
            <Drop id={`${id}-module`} value="Visualization" w={40} />
            <ContextGap $w={4} />
            <ContextLabel htmlFor={`${id}-model`}>Model:</ContextLabel>
            <Drop id={`${id}-model`} value="C:/temp/Job-1.odb" w={52} />
            <Playback>
              <Tools names="first prev next last" />
              <ContextGap $w={2} />
              <Tools names="link cam cam2" />
            </Playback>
          </Context>
          <Stage>
            <Toolbox>
              {toolGroups.map((g, gi) => (
                <ToolGroup key={gi}>
                  {g.map((n, i) => (
                    <Tool key={i} name={n} on={n === activeTool} />
                  ))}
                </ToolGroup>
              ))}
            </Toolbox>
            <Viewport>
              {children}
              <Compass />
              <Triad />
              <Status>
                <StatusLine $gap={16} $after={6}>
                  <span>ODB: Job-1.odb</span>
                  <span>Abaqus/Standard 2023</span>
                  <span>Fri Oct 25 11:08:52 Eastern Daylight Time 2024</span>
                </StatusLine>
                <StatusLine>Step: Apply Pressure, Uniform 20kpa load</StatusLine>
                <StatusLine $gap={16}>
                  <span>Increment</span>
                  <span>1: Step Time =</span>
                  <span>1.000</span>
                </StatusLine>
                {symbolVar && <StatusLine>Symbol Var: {symbolVar}</StatusLine>}
              </Status>
            </Viewport>
          </Stage>
          <Prompt>
            <DsLogo />
            <span>SIMULIA</span>
          </Prompt>
        </Work>
      </Body>
      <MessageArea $h={messageHeight}>
        <MessageTabs>
          {messageIcons.map((n) => (
            <Tool key={n} name={n} />
          ))}
        </MessageTabs>
        <MessageText>The model database "C:\temp\skew plate.cae" has been opened.</MessageText>
      </MessageArea>
    </>
  );
};

export default function App() {
  return (
    <>
      <Global />
      <Page>
        <Frame>
          <AbaqusWindow plot="Primary" variable="Mises" activeTool="ell" messageHeight={25} messageIcons={["msg", "cli"]}>
            <PressurePlate />
          </AbaqusWindow>
        </Frame>
        <Frame>
          <AbaqusWindow plot="Symbol" variable="ALL_PRINCIPAL" activeTool="ellO" inactive messageHeight={17} messageIcons={["msg"]} symbolVar="S">
            <StressPlate />
            <Legend>
              <LegendLine $after={5}>SPOS, (fraction = 1.0)</LegendLine>
              <LegendLine $after={3}>S, Max. In-Plane Principal</LegendLine>
              <LegendLine $after={4}>S, Min. In-Plane Principal</LegendLine>
              <LegendLine $after={5}>S, Out-of-Plane Principal</LegendLine>
              <Scale>
                <Ramp>
                  {ramp.map((c) => (
                    <Swatch key={c} $c={c} />
                  ))}
                </Ramp>
                <Values>
                  {values.map((v) => (
                    <li key={v}>{v}</li>
                  ))}
                </Values>
              </Scale>
            </Legend>
          </AbaqusWindow>
          <Taskbar />
        </Frame>
      </Page>
    </>
  );
}
